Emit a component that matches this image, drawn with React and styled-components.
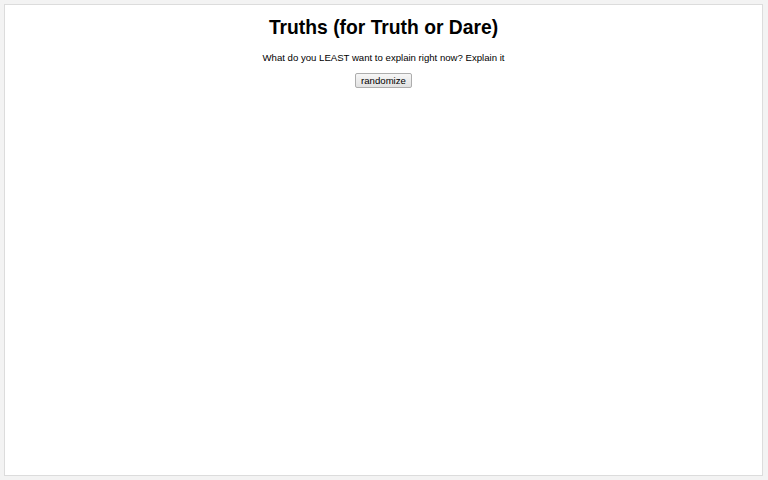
import React from "react";
import styled, { createGlobalStyle } from "styled-components";

const Global = createGlobalStyle`
  html, body { margin: 0; padding: 0; background: #f3f3f3; height: 100%; }
  body { font-family: "Liberation Sans", Arial, sans-serif; }
  #root { height: 100%; }
`;

const Page = styled.div`
  box-sizing: border-box;
  height: 480px;
  padding: 4px 5px 4px 4px;
`;

const Card = styled.main`
  box-sizing: border-box;
  height: 100%;
  background: #fff;
  border: 1px solid #dcdcdc;
  display: flex;
  flex-direction: column;
  align-items: center;
  padding-top: 13px;
`;

const Title = styled.h1`
  margin: 0;
  font-size: 19.3px;
  font-weight: bold;
  color: #000;
  line-height: 20px;
`;

const Prompt = styled.p`
  margin: 14px 0 0;
  font-size: 9.6px;
  line-height: 11px;
  color: #000;
`;

const Button = styled.button`
  margin-top: 10px;
  font-family: "Liberation Sans", Arial, sans-serif;
  font-size: 9.6px;
  line-height: 11px;
  padding: 0 5px;
  height: 15px;
  background: linear-gradient(#f6f6f6, #e2e2e2);
  border: 1px solid #adadad;
  border-radius: 2px;
  color: #000;
`;

export default function App() {
  return (
    <>
      <Global />
      <Page>
        <Card>
          <Title>Truths (for Truth or Dare)</Title>
          <Prompt>What do you LEAST want to explain right now? Explain it</Prompt>
          <Button>randomize</Button>
        </Card>
      </Page>
    </>
  );
}
